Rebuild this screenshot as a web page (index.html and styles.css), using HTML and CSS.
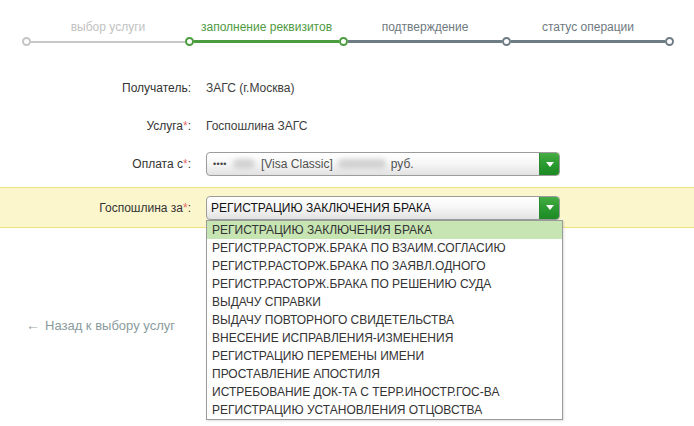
FILE: index.html
```
<!DOCTYPE html>
<html lang="ru">
<head>
<meta charset="utf-8">
<title>Госпошлина ЗАГС</title>
<link rel="stylesheet" href="styles.css">
</head>
<body>
<div class="stepper">
  <div class="lbl lbl-1 done">выбор услуги</div>
  <div class="lbl lbl-2 active">заполнение реквизитов</div>
  <div class="lbl lbl-3">подтверждение</div>
  <div class="lbl lbl-4">статус операции</div>
  <span class="dot dot-grey"></span>
  <span class="line line-grey"></span>
  <span class="dot dot-green"></span>
  <span class="line line-green"></span>
  <span class="dot dot-green"></span>
  <span class="line line-slate"></span>
  <span class="dot dot-slate"></span>
  <span class="line line-slate"></span>
  <span class="dot dot-slate"></span>
</div>

<div class="form">
  <div class="row">
    <div class="label">Получатель:</div>
    <div class="value">ЗАГС (г.Москва)</div>
  </div>
  <div class="row">
    <div class="label">Услуга<span class="req">*</span>:</div>
    <div class="value">Госпошлина ЗАГС</div>
  </div>
  <div class="row">
    <div class="label">Оплата с<span class="req">*</span>:</div>
    <div class="value">
      <div class="combo">
        <div class="select">
          <span class="select-text card">
            <span class="dots">••••</span>
            <span class="blur blur-a"></span>
            <span>[Visa Classic]</span>
            <span class="blur blur-b"></span>
            <span>руб.</span>
          </span>
          <span class="btn"><span class="tri"></span></span>
        </div>
      </div>
    </div>
  </div>
  <div class="row band">
    <div class="label">Госпошлина за<span class="req">*</span>:</div>
    <div class="value">
      <div class="combo">
        <div class="select">
          <span class="select-text dark">РЕГИСТРАЦИЮ ЗАКЛЮЧЕНИЯ БРАКА</span>
          <span class="btn"><span class="tri"></span></span>
        </div>
        <ul class="list">
          <li class="sel">РЕГИСТРАЦИЮ ЗАКЛЮЧЕНИЯ БРАКА</li>
          <li>РЕГИСТР.РАСТОРЖ.БРАКА ПО ВЗАИМ.СОГЛАСИЮ</li>
          <li>РЕГИСТР.РАСТОРЖ.БРАКА ПО ЗАЯВЛ.ОДНОГО</li>
          <li>РЕГИСТР.РАСТОРЖ.БРАКА ПО РЕШЕНИЮ СУДА</li>
          <li>ВЫДАЧУ СПРАВКИ</li>
          <li>ВЫДАЧУ ПОВТОРНОГО СВИДЕТЕЛЬСТВА</li>
          <li>ВНЕСЕНИЕ ИСПРАВЛЕНИЯ-ИЗМЕНЕНИЯ</li>
          <li>РЕГИСТРАЦИЮ ПЕРЕМЕНЫ ИМЕНИ</li>
          <li>ПРОСТАВЛЕНИЕ АПОСТИЛЯ</li>
          <li>ИСТРЕБОВАНИЕ ДОК-ТА С ТЕРР.ИНОСТР.ГОС-ВА</li>
          <li>РЕГИСТРАЦИЮ УСТАНОВЛЕНИЯ ОТЦОВСТВА</li>
        </ul>
      </div>
    </div>
  </div>
</div>

<a class="back" href="#"><span class="arrow">←</span>Назад к выбору услуг</a>
</body>
</html>
```

FILE: styles.css
```
* { box-sizing: border-box; }
html, body { margin: 0; padding: 0; background: #fff; }
body {
  font-family: "Liberation Sans", Arial, sans-serif;
  font-size: 12px;
  color: #333;
  width: 694px;
  height: 426px;
  overflow: hidden;
}

/* stepper */
.stepper {
  display: grid;
  grid-template-columns: 9px 154px 9px 145px 9px 154px 9px 154px 9px;
  grid-template-rows: 14px 9px;
  row-gap: 3px;
  margin-left: 22px;
  padding-top: 20px;
}
.lbl {
  grid-row: 1;
  text-align: center;
  white-space: nowrap;
  line-height: 14px;
  color: #6f7a81;
}
.lbl-1 { grid-column: 1 / 4; color: #c2c2c2; }
.lbl-2 { grid-column: 3 / 6; color: #4f9a43; }
.lbl-3 { grid-column: 5 / 8; }
.lbl-4 { grid-column: 7 / 10; }
.dot, .line { grid-row: 2; }
.dot {
  width: 9px;
  height: 9px;
  border-radius: 50%;
  border: 2px solid #6e7c85;
  background: #fff;
}
.dot-grey { border-color: #c4c4c4; }
.dot-green { border-color: #4b9b3f; }
.dot-slate { border-color: #6e7c85; }
.line { align-self: center; height: 3px; }
.line-grey { height: 2px; background: #c8c8c8; }
.line-green { background: #4b9b3f; }
.line-slate { background: #6e7c85; }

/* form */
.form { margin-top: 23px; }
.row {
  display: flex;
  align-items: center;
  height: 38px;
}
.label {
  flex: none;
  width: 191px;
  text-align: right;
  color: #333;
}
.req { color: #e86a6a; }
.value {
  margin-left: 15px;
  color: #3d3d3d;
}
.band {
  margin-top: 4px;
  height: 41px;
  background: #fcf6cd;
  border-top: 1px solid #ece27f;
  border-bottom: 1px solid #ece27f;
}

.combo { position: relative; width: 354px; }
.select {
  display: flex;
  align-items: stretch;
  height: 24px;
  border: 1px solid #9c9c9c;
  border-radius: 4px;
  background: linear-gradient(#ffffff 0%, #f7f7f7 45%, #e2e2e2 100%);
  overflow: hidden;
}
.select-text {
  flex: 1;
  display: flex;
  align-items: center;
  padding-left: 4px;
  white-space: nowrap;
}
.select-text.dark { color: #111; }
.card { color: #505050; }
.dots { font-size: 9px; letter-spacing: 0.3px; color: #444; width: 22px; padding-left: 2px; }
.blur {
  display: inline-block;
  height: 10px;
  border-radius: 5px;
  background: #d2d2d2;
  filter: blur(2.5px);
}
.blur-a { width: 22px; margin-right: 6px; }
.blur-b { width: 48px; margin: 0 5px 0 5px; }
.btn {
  flex: none;
  width: 20px;
  display: flex;
  align-items: center;
  justify-content: center;
  background: linear-gradient(#45ad43 0%, #2b9a30 50%, #1d8a25 100%);
  border-left: 1px solid #2b8a2e;
}
.tri {
  width: 0;
  height: 0;
  border-left: 4px solid transparent;
  border-right: 4px solid transparent;
  border-top: 5px solid #fff;
}

.list {
  position: absolute;
  top: 24px;
  left: 0;
  width: 357px;
  margin: 0;
  padding: 0;
  list-style: none;
  background: #fff;
  border: 1px solid #9a9a9a;
  box-shadow: 1px 1px 2px rgba(0,0,0,0.12);
  z-index: 2;
}
.list li {
  height: 18px;
  line-height: 18px;
  padding-left: 5px;
  color: #333;
  white-space: nowrap;
}
.list li.sel { background: #c7e5b3; }

/* back link */
.back {
  display: block;
  margin-top: 90px;
  padding-left: 26px;
  font-size: 13px;
  line-height: 15px;
  color: #8a9b9d;
  text-decoration: none;
}
.arrow { display: inline-block; width: 19px; font-size: 14px; color: #9aa6a8; }
```
